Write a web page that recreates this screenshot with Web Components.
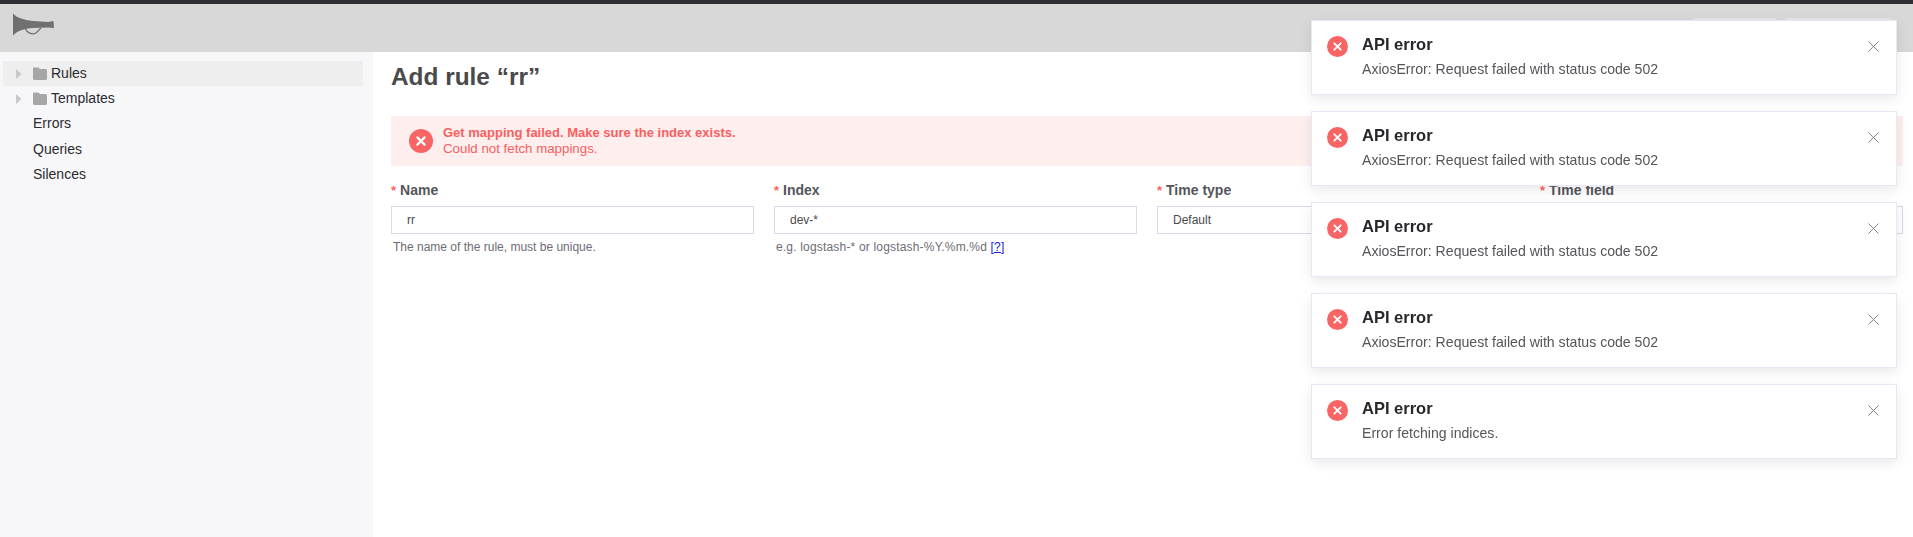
<!DOCTYPE html>
<html>
<head>
<meta charset="utf-8">
<title>Add rule</title>
<style>
html, body { margin: 0; height: 100%; background: #fff; }
body { font-family: "Liberation Sans", Arial, sans-serif; overflow: hidden; }
</style>
</head>
<body>
<app-shell>
  <app-header slot="header"></app-header>
  <app-sidebar slot="sidebar">
    <nav-item folder selected>Rules</nav-item>
    <nav-item folder>Templates</nav-item>
    <nav-item>Errors</nav-item>
    <nav-item>Queries</nav-item>
    <nav-item>Silences</nav-item>
  </app-sidebar>
  <rule-page heading="Add rule “rr”">
    <error-alert heading="Get mapping failed. Make sure the index exists.">Could not fetch mappings.</error-alert>
    <form-field label="Name" value="rr">The name of the rule, must be unique.</form-field>
    <form-field label="Index" value="dev-*" style="letter-spacing:.18px">e.g. logstash-* or logstash-%Y.%m.%d <a href="#">[?]</a></form-field>
    <form-field label="Time type" value="Default"></form-field>
    <form-field label="Time field" value=""></form-field>
  </rule-page>
</app-shell>
<toast-stack>
  <toast-card heading="API error">AxiosError: Request failed with status code 502</toast-card>
  <toast-card heading="API error">AxiosError: Request failed with status code 502</toast-card>
  <toast-card heading="API error">AxiosError: Request failed with status code 502</toast-card>
  <toast-card heading="API error">AxiosError: Request failed with status code 502</toast-card>
  <toast-card heading="API error">Error fetching indices.</toast-card>
</toast-stack>

<script>
const errorIcon = size => `
<svg width="${size}" height="${size}" viewBox="0 0 24 24" style="display:block">
  <circle cx="12" cy="12" r="12" fill="#f96464"/>
  <path d="M8.4 8.4 L15.6 15.6 M15.6 8.4 L8.4 15.6" stroke="#fff" stroke-width="2.2" stroke-linecap="round" fill="none"/>
</svg>`;

class AppShell extends HTMLElement {
  constructor() {
    super();
    this.attachShadow({ mode: 'open' }).innerHTML = `
    <style>
      :host { display: flex; flex-direction: column; height: 537px; }
      .body { display: flex; flex: 1; min-height: 0; }
    </style>
    <slot name="header"></slot>
    <div class="body">
      <slot name="sidebar"></slot>
      <slot></slot>
    </div>`;
  }
}

class AppHeader extends HTMLElement {
  constructor() {
    super();
    this.attachShadow({ mode: 'open' }).innerHTML = `
    <style>
      :host { display: flex; height: 48px; background: #d8d8d8; border-top: 4px solid #2f2f33; align-items: flex-start; }
      svg { display: block; margin: 9px 0 0 13px; }
      .actions { margin-left: auto; display: flex; gap: 8px; padding: 14px 21px 0 0; }
      .btn { height: 30px; background: #e6e6e6; border-radius: 3px; }
    </style>
    <svg width="42" height="23" viewBox="0 0 42 23">
      <path d="M0 .5 C4 5 11 7 20 8 L35 9 L40.5 8 L41 15 L35 14.500 L20 15 C11 15.500 4 18 0 22.500 Z" fill="#707070"/>
      <path d="M12 15 C14 20 19 22 23 20 L28 15" fill="none" stroke="#707070" stroke-width="1.300"/>
    </svg>
    <div class="actions">
      <div class="btn" style="width:84px"></div>
      <div class="btn" style="width:107px"></div>
    </div>`;
  }
}

class AppSidebar extends HTMLElement {
  constructor() {
    super();
    this.attachShadow({ mode: 'open' }).innerHTML = `
    <style>
      :host { display: block; width: 373px; flex: none; background: #f7f7fa; padding: 9px 10px 0 3px; box-sizing: border-box; }
    </style>
    <slot></slot>`;
  }
}

class NavItem extends HTMLElement {
  constructor() {
    super();
    const folder = this.hasAttribute('folder');
    const selected = this.hasAttribute('selected');
    this.attachShadow({ mode: 'open' }).innerHTML = `
    <style>
      :host { display: flex; align-items: center; height: 25.200px; font-size: 14px; color: #2b2b2f; }
      .row { display: flex; align-items: center; flex: 1; height: 25px; padding-left: 13px; background: ${selected ? '#eeeeee' : 'transparent'}; }
      .arrow { width: 17px; flex: none; }
      .gap { width: 17px; flex: none; }
      .label { padding-bottom: 1px; }
      svg { display: block; }
      .folder { margin-right: 4px; }
    </style>
    <div class="row">
      ${folder ? `
      <svg class="arrow" width="6" height="10" viewBox="0 0 6 10" style="width:6px;margin-right:11px"><path d="M0 0 L5.500 5 L0 10 Z" fill="#c8c8c8"/></svg>
      <svg class="folder" width="14" height="13" viewBox="0 0 14 13"><path d="M1 .500 H5 C6 .500 6.400 2 7.500 2 H12.500 C13.300 2 14 2.700 14 3.500 V11.500 C14 12.300 13.300 13 12.500 13 H1.500 C.700 13 0 12.300 0 11.500 V1.500 C0 .900 .400 .500 1 .500 Z" fill="#a6a6a6"/></svg>
      ` : `<span class="gap"></span>`}
      <span class="label"><slot></slot></span>
    </div>`;
  }
}

class RulePage extends HTMLElement {
  constructor() {
    super();
    this.attachShadow({ mode: 'open' }).innerHTML = `
    <style>
      :host { display: block; flex: 1; min-width: 0; padding: 0 10px 0 18px; }
      h1 { margin: 11px 0 0; font-size: 24.400px; line-height: 28px; font-weight: 700; color: #4a4a4a; height: 53px; }
      .form { display: grid; grid-template-columns: repeat(4, 363px); column-gap: 20px; }
      ::slotted(error-alert) { grid-column: 1 / -1; }
    </style>
    <h1>${this.getAttribute('heading')}</h1>
    <div class="form"><slot></slot></div>`;
  }
}

class ErrorAlert extends HTMLElement {
  constructor() {
    super();
    this.attachShadow({ mode: 'open' }).innerHTML = `
    <style>
      :host { display: flex; align-items: center; height: 50px; background: #feeeee; padding-left: 18px; color: #f95f5f; font-size: 13.300px; line-height: 16px; margin-bottom: 15px; }
      .icon { margin-right: 10px; }
      b { display: block; font-size: 13px; }
    </style>
    <div class="icon">${errorIcon(24)}</div>
    <div><b>${this.getAttribute('heading')}</b><slot></slot></div>`;
  }
}

class FormField extends HTMLElement {
  constructor() {
    super();
    this.attachShadow({ mode: 'open' }).innerHTML = `
    <style>
      :host { display: block; font-size: 12px; }
      label { display: block; font-size: 14px; font-weight: 700; line-height: 18px; color: #55555a; margin-bottom: 6px; letter-spacing: 0; }
      i { font-style: normal; color: #f96464; font-size: 13px; margin-right: 4px; }
      input { display: block; width: 100%; box-sizing: border-box; height: 28px; border: 1px solid #d8d8e6; padding: 0 15px 1px; font: 12px "Liberation Sans", Arial, sans-serif; color: #4a4a4a; background: #fff; outline: none; border-radius: 0; }
      .hint { font-size: 12px; line-height: 16px; color: #6d6d75; margin: 5px 0 0 2px; }
      ::slotted(a) { color: #1a1ad0; }
    </style>
    <label><i>*</i>${this.getAttribute('label')}</label>
    <input value="${this.getAttribute('value')}">
    <div class="hint"><slot></slot></div>`;
  }
}

class ToastStack extends HTMLElement {
  constructor() {
    super();
    this.attachShadow({ mode: 'open' }).innerHTML = `
    <style>
      :host { position: fixed; top: 20px; left: 1311px; width: 586px; display: flex; flex-direction: column; gap: 16px; }
    </style>
    <slot></slot>`;
  }
}

class ToastCard extends HTMLElement {
  constructor() {
    super();
    this.attachShadow({ mode: 'open' }).innerHTML = `
    <style>
      :host { display: flex; box-sizing: border-box; height: 75px; background: #fff; border: 1px solid #e8e8f4; box-shadow: 0 4px 12px rgba(0,0,0,.09); padding: 15px 0 0 15px; position: relative; }
      .icon { flex: none; width: 21px; margin-right: 14px; margin-top: 0; }
      .title { font-size: 16.500px; font-weight: 700; line-height: 18px; color: #28282c; margin-top: -1px; }
      .text { font-size: 14.100px; line-height: 18px; color: #55555a; margin-top: 7px; }
      .close { position: absolute; right: 17px; top: 20px; display: block; }
    </style>
    <div class="icon">${errorIcon(21)}</div>
    <div>
      <div class="title">${this.getAttribute('heading')}</div>
      <div class="text"><slot></slot></div>
    </div>
    <svg class="close" width="11" height="11" viewBox="0 0 11 11"><path d="M.5 .5 L10.500 10.500 M10.500 .5 L.5 10.500" stroke="#85858b" stroke-width="1" fill="none"/></svg>`;
  }
}

customElements.define('app-shell', AppShell);
customElements.define('app-header', AppHeader);
customElements.define('app-sidebar', AppSidebar);
customElements.define('nav-item', NavItem);
customElements.define('rule-page', RulePage);
customElements.define('error-alert', ErrorAlert);
customElements.define('form-field', FormField);
customElements.define('toast-stack', ToastStack);
customElements.define('toast-card', ToastCard);
</script>
</body>
</html>
